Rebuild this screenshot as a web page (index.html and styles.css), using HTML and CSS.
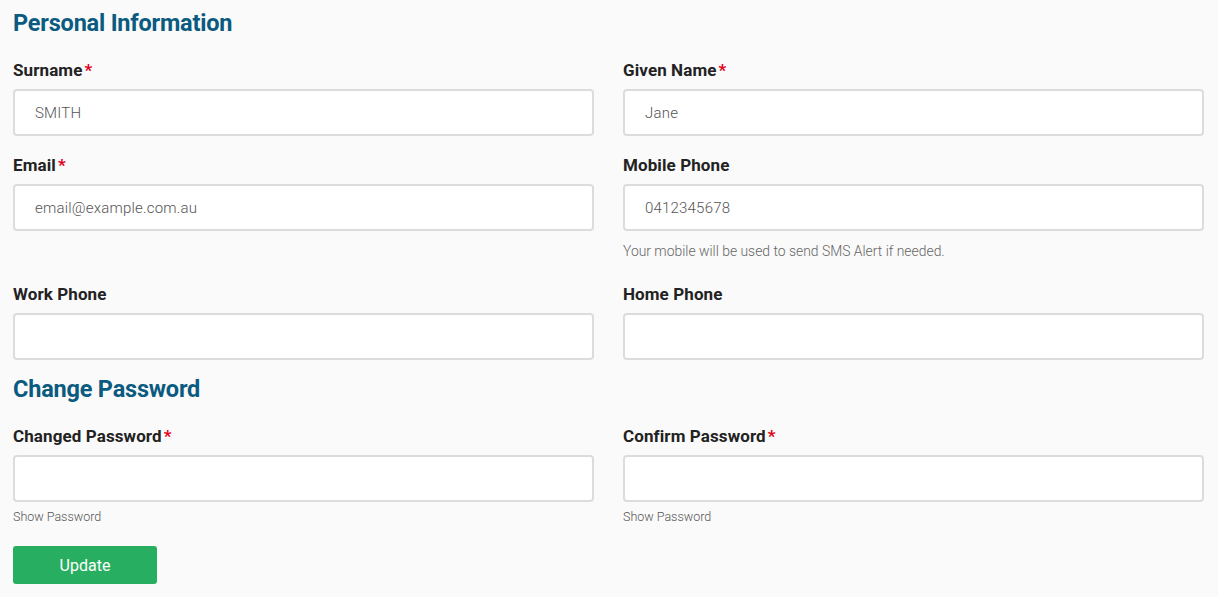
FILE: index.html
```html
<!DOCTYPE html>
<html lang="en">
<head>
<meta charset="utf-8">
<title>Profile</title>
<link rel="stylesheet" href="styles.css">
</head>
<body>
<form class="page">
  <h2 class="section-title">Personal Information</h2>
  <div class="form-grid">
    <div class="field">
      <label class="field-label">Surname<span class="req">*</span></label>
      <input class="field-input" type="text" value="SMITH">
    </div>
    <div class="field">
      <label class="field-label">Given Name<span class="req">*</span></label>
      <input class="field-input" type="text" value="Jane">
    </div>
    <div class="field">
      <label class="field-label">Email<span class="req">*</span></label>
      <input class="field-input" type="text" placeholder="email@example.com.au">
    </div>
    <div class="field">
      <label class="field-label">Mobile Phone</label>
      <input class="field-input" type="text" value="0412345678">
      <p class="help">Your mobile will be used to send SMS Alert if needed.</p>
    </div>
    <div class="field">
      <label class="field-label">Work Phone</label>
      <input class="field-input" type="text">
    </div>
    <div class="field">
      <label class="field-label">Home Phone</label>
      <input class="field-input" type="text">
    </div>
  </div>

  <h2 class="section-title second">Change Password</h2>
  <div class="form-grid">
    <div class="field">
      <label class="field-label">Changed Password<span class="req">*</span></label>
      <input class="field-input" type="password">
      <span class="show-pw">Show Password</span>
    </div>
    <div class="field">
      <label class="field-label">Confirm Password<span class="req">*</span></label>
      <input class="field-input" type="password">
      <span class="show-pw">Show Password</span>
    </div>
  </div>

  <button class="btn-update" type="button">Update</button>
</form>
</body>
</html>
```

FILE: styles.css
```css
* {
  box-sizing: border-box;
}

html, body {
  margin: 0;
  padding: 0;
  background: #fafafa;
}

body {
  font-family: Roboto, "Liberation Sans", Arial, sans-serif;
  color: #222;
}

.page {
  padding: 9px 14px 0 13px;
  display: flex;
  flex-direction: column;
  align-items: flex-start;
}

.section-title {
  margin: 0 0 23px 0;
  font-size: 23.5px;
  line-height: 29px;
  font-weight: 700;
  color: #0b5a80;
  letter-spacing: -0.2px;
}

.section-title.second {
  margin-top: 15px;
  margin-bottom: 23px;
}

.form-grid {
  align-self: stretch;
  display: grid;
  grid-template-columns: 1fr 1fr;
  column-gap: 29px;
  row-gap: 20px;
}

.field {
  display: flex;
  flex-direction: column;
  align-items: flex-start;
}

.field-label {
  font-size: 17px;
  line-height: 19px;
  font-weight: 700;
  color: #222;
  margin-bottom: 9px;
  letter-spacing: 0.1px;
}

.req {
  color: #e2001a;
  margin-left: 2px;
}

.field-input {
  width: 100%;
  height: 47px;
  border: 2px solid #dcdcdc;
  border-radius: 4px;
  background: #fff;
  padding: 0 20px;
  font-family: Roboto, "Liberation Sans", Arial, sans-serif;
  font-size: 15px;
  font-weight: 300;
  color: #555;
  letter-spacing: 0.2px;
  outline: none;
}

.field-input::placeholder {
  color: #555;
  opacity: 1;
}

.help {
  margin: 11px 0 4px 0;
  font-size: 13.9px;
  line-height: 19px;
  font-weight: 300;
  color: #666;
}

.show-pw {
  margin-top: 6px;
  font-size: 12.5px;
  line-height: 17px;
  font-weight: 300;
  color: #555;
}

.btn-update {
  margin-top: 21px;
  width: 144px;
  height: 38px;
  border: none;
  border-radius: 3px;
  background: #27ae60;
  color: #fff;
  font-family: Roboto, "Liberation Sans", Arial, sans-serif;
  font-size: 16px;
  font-weight: 400;
  cursor: pointer;
}
```
